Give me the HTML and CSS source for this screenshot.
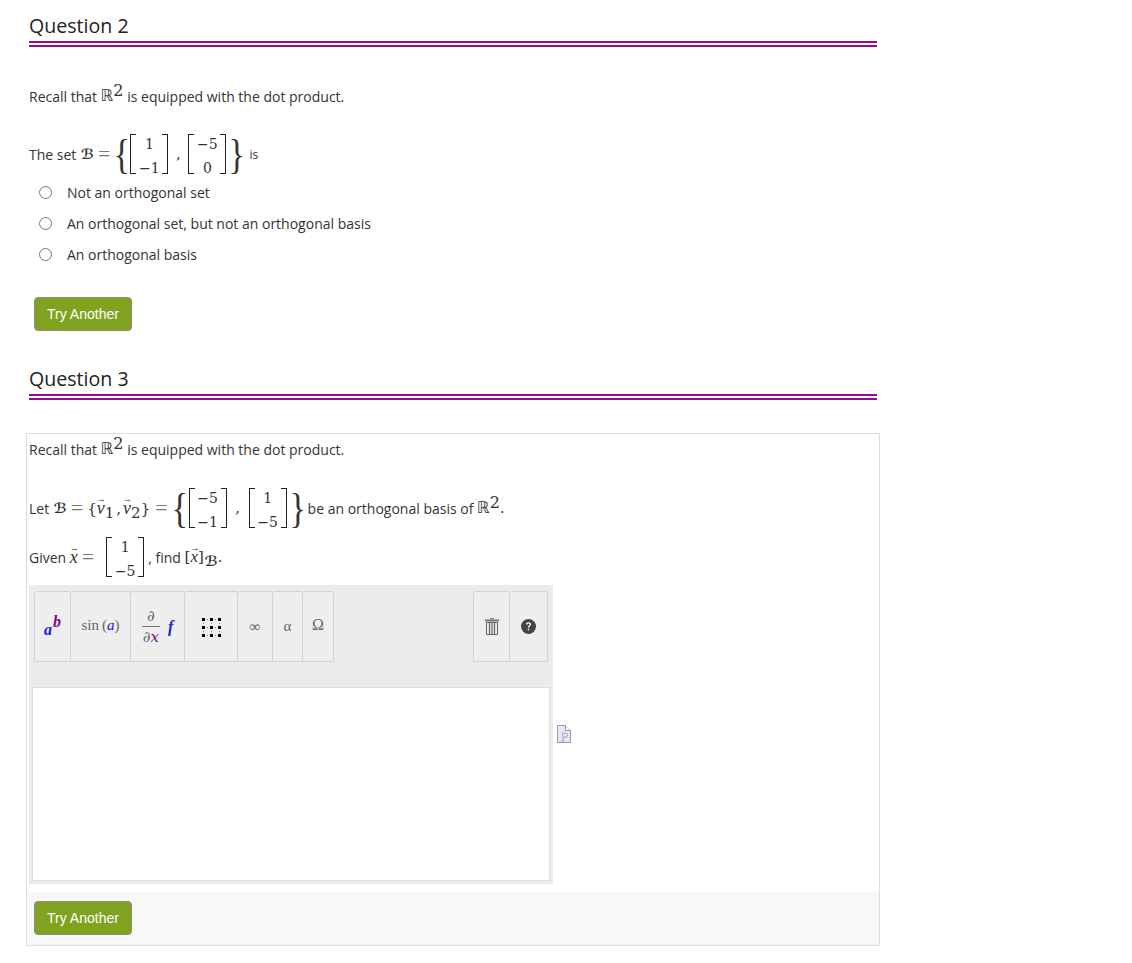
FILE: index.html
```html
<!DOCTYPE html>
<html lang="en">
<head>
<meta charset="utf-8">
<title>Questions</title>
<link rel="stylesheet" href="styles.css">
</head>
<body>
<main class="page">
  <section class="question">
    <h2 class="q-title">Question 2</h2>
    <p class="line recall">Recall that&nbsp;<span class="m bb">ℝ</span><span class="m sup">2</span>&nbsp;is equipped with the dot product.</p>
    <div class="line tall small-gap-a">
      <span>The set&nbsp;</span><span class="m script">ℬ</span><span class="m eq">=</span>
      <span class="m brace open">{</span>
      <span class="mat"><span>1</span><span>−1</span></span>
      <span class="m comma">,</span>
      <span class="mat"><span>−5</span><span>0</span></span>
      <span class="m brace close">}</span>
      <span class="after-brace small">is</span>
    </div>
    <ul class="choices">
      <li><label class="choice"><input type="radio" name="q2"><span>Not an orthogonal set</span></label></li>
      <li><label class="choice"><input type="radio" name="q2"><span>An orthogonal set, but not an orthogonal basis</span></label></li>
      <li><label class="choice"><input type="radio" name="q2"><span>An orthogonal basis</span></label></li>
    </ul>
    <button class="try first-try" type="button">Try Another</button>
  </section>

  <section class="question second">
    <h2 class="q-title">Question 3</h2>
    <div class="box">
      <p class="line recall-box">Recall that&nbsp;<span class="m bb">ℝ</span><span class="m sup">2</span>&nbsp;is equipped with the dot product.</p>
      <div class="line tall let-row">
        <span>Let&nbsp;</span><span class="m script">ℬ</span><span class="m eq">=</span>
        <span class="m set">{<span class="vec">v<i class="arrow">→</i></span><span class="sub">1</span><span class="set-comma">,</span><span class="vec">v<i class="arrow">→</i></span><span class="sub">2</span>}</span>
        <span class="m eq">=</span>
        <span class="m brace open let-open">{</span>
        <span class="mat"><span>−5</span><span>−1</span></span>
        <span class="m comma wide">,</span>
        <span class="mat"><span>1</span><span>−5</span></span>
        <span class="m brace close">}</span>
        <span class="after-brace let-after">be an orthogonal basis of&nbsp;</span><span class="m bb">ℝ</span><span class="m sup">2</span><span class="m dot">.</span>
      </div>
      <div class="line tall given-row">
        <span>Given&nbsp;</span><span class="m vec vec-x">x<i class="arrow">→</i></span><span class="m eq">=</span>
        <span class="mat given">
          <span>1</span><span>−5</span>
        </span>
        <span class="find">, find&nbsp;</span><span class="m bracket">[<span class="vec vec-x">x<i class="arrow">→</i></span>]</span><span class="m script sub-b">ℬ</span><span class="m dot">.</span>
      </div>

      <div class="editor-row">
        <div class="editor">
          <div class="toolbar">
            <div class="tools">
              <button class="tool t1" type="button"><span class="m blue it big">a</span><span class="m purple it raised">b</span></button>
              <button class="tool t2" type="button"><span class="m gray sin">sin&#8201;(<span class="blue it">a</span>)</span></button>
              <button class="tool t3" type="button">
                <span class="frac m"><span class="gray">∂</span><span class="gray den">∂<span class="purple it">x</span></span></span>
                <span class="m blue it f">f</span>
              </button>
              <button class="tool t4" type="button" aria-label="Matrix">
                <svg width="20" height="20" viewBox="0 0 20 20" aria-hidden="true">
                  <g fill="#000">
                    <rect x="1" y="1" width="3" height="3"/><rect x="9" y="1" width="3" height="3"/><rect x="17" y="1" width="3" height="3"/>
                    <rect x="1" y="9" width="3" height="3"/><rect x="9" y="9" width="3" height="3"/><rect x="17" y="9" width="3" height="3"/>
                    <rect x="1" y="17" width="3" height="3"/><rect x="9" y="17" width="3" height="3"/><rect x="17" y="17" width="3" height="3"/>
                  </g>
                  <g fill="#777">
                    <rect x="6" y="2" width="1" height="1"/><rect x="14" y="2" width="1" height="1"/>
                    <rect x="6" y="10" width="1" height="1"/><rect x="14" y="10" width="1" height="1"/>
                    <rect x="6" y="18" width="1" height="1"/><rect x="14" y="18" width="1" height="1"/>
                    <rect x="2" y="6" width="1" height="1"/><rect x="10" y="6" width="1" height="1"/><rect x="18" y="6" width="1" height="1"/>
                    <rect x="2" y="14" width="1" height="1"/><rect x="10" y="14" width="1" height="1"/><rect x="18" y="14" width="1" height="1"/>
                  </g>
                </svg>
              </button>
              <button class="tool t5" type="button"><span class="m gray inf">∞</span></button>
              <button class="tool t6" type="button"><span class="m gray sym">α</span></button>
              <button class="tool t7" type="button"><span class="m gray sym omega">Ω</span></button>
            </div>
            <div class="tools">
              <button class="tool t8" type="button" aria-label="Clear">
                <svg width="14" height="17" viewBox="0 0 14 17" aria-hidden="true">
                  <rect x="5" y="0" width="4" height="1.5" fill="#888"/>
                  <rect x="0" y="1.5" width="14" height="2" fill="#777"/>
                  <path d="M1.5 4.5h11V16.500h-11z" fill="none" stroke="#666"/>
                  <path d="M4.500 5v11M7 5v11M9.500 5v11" stroke="#666" stroke-width="1.200"/>
                </svg>
              </button>
              <button class="tool t9" type="button" aria-label="Help">
                <svg width="15" height="15" viewBox="0 0 15 15" aria-hidden="true">
                  <circle cx="7.500" cy="7.500" r="7.500" fill="#444"/>
                  <path d="M5 5.600c0-1.500 1.100-2.300 2.600-2.300 1.500 0 2.500.8 2.500 2 0 1.900-2 1.800-2 3.500H6.800c0-2.300 1.900-2.200 1.900-3.400 0-.5-.4-.9-1.100-.9-.7 0-1.200.4-1.200 1.100z" fill="#fff"/>
                  <rect x="6.800" y="9.800" width="1.400" height="1.600" fill="#fff"/>
                </svg>
              </button>
            </div>
          </div>
          <div class="input-area"></div>
        </div>
        <svg class="doc-icon" width="14" height="18" viewBox="0 0 14 18" aria-hidden="true">
          <path d="M.5.500h8l5 5v12H.500z" fill="#e6e8fa" stroke="#9a9aa8"/>
          <path d="M8.500.500v5h5" fill="#fff" stroke="#9a9aa8"/>
          <path d="M5 8h3.500a2 2 0 0 1 0 4.200H6M6 8v8M4.500 16H7.500" fill="none" stroke="#a5a5b5"/>
        </svg>
      </div>
      <div class="box-footer">
        <button class="try" type="button">Try Another</button>
      </div>
    </div>
  </section>
</main>
</body>
</html>
```

FILE: styles.css
```css
* { box-sizing: border-box; }
html, body { margin: 0; padding: 0; background: #fff; }
body {
  font-family: "Open Sans", "Liberation Sans", sans-serif;
  font-size: 14px;
  color: #333;
}
.page { width: 848px; margin-left: 29px; padding-bottom: 17px; }
.question { display: flow-root; }
.question.second { margin-top: 22px; }
.q-title {
  margin: 12px 0 0;
  height: 35px;
  font-size: 19.6px;
  font-weight: 400;
  line-height: 28px;
  color: #222;
  border-bottom: 6px double #8f0a8f;
}
.line { display: flex; align-items: center; margin: 0; white-space: pre; }
.recall { height: 28px; margin-top: 35px; }
.tall { height: 44px; }
.small-gap-a { margin-top: 22px; margin-bottom: 1px; }
.m { font-family: "DejaVu Serif", "Liberation Serif", serif; color: #333; }
.bb { font-family: "DejaVu Sans", sans-serif; font-size: 16px; line-height: 1; }
.sup { font-size: 16px; line-height: 1; position: relative; top: -5px; margin-left: 0; }
.script { font-family: "DejaVu Sans", sans-serif; font-style: italic; font-weight: 700; font-size: 14px; margin-left: 1px; }
.eq { font-family: "Liberation Serif", serif; font-size: 22px; line-height: 1; color: #777; margin: 0 4px; }
.brace {
  font-family: "Liberation Serif", serif;
  font-size: 43px;
  line-height: 44px;
  font-weight: 400;
  display: inline-block;
  width: 14px;
  text-align: center;
  transform: scaleX(.8);
}
.brace.open { margin: 0 4px 0 -2px; }
.brace.let-open { margin-right: 5px; }
.brace.close { margin: 0 0 0 1px; }
.mat {
  position: relative;
  display: inline-grid;
  grid-template-rows: 20px 20px;
  justify-items: center;
  align-items: center;
  row-gap: 4px;
  width: 38px;
  height: 40px;
  padding: 0 4px;
  font-family: "DejaVu Serif", serif;
  font-size: 14px;
  line-height: 20px;
  color: #333;
}
.mat::before, .mat::after {
  content: "";
  position: absolute;
  top: 0;
  bottom: 0;
  width: 5px;
  border-top: 1px solid #222;
  border-bottom: 1px solid #222;
}
.mat::before { left: 0; border-left: 1px solid #222; }
.mat::after { right: 0; border-right: 1px solid #222; }
.mat.given { margin-left: 8px; }
.comma { width: 20px; text-align: center; font-size: 15px; }
.comma.wide { width: 22px; }
.after-brace { margin-left: 8px; }
.after-brace.let-after { margin-left: 6px; }
.small { font-size: 12px; }
.choices { list-style: none; margin: 0; padding: 0; }
.choices li { height: 31px; }
.choice { display: flex; align-items: center; height: 31px; }
.choice input { margin: 0 15px 0 10px; width: 13px; height: 13px; flex: none; }
.try {
  display: block;
  width: 98px;
  height: 34px;
  padding: 0;
  background: #7fa31f;
  border: 1px solid #8a8f80;
  border-radius: 4px;
  color: #fff;
  font-family: "Liberation Sans", Arial, sans-serif;
  font-size: 14px;
}
.first-try { margin: 27px 0 0 5px; }
.box {
  width: 854px;
  margin: 33px 0 0 -3px;
  padding-top: 1px;
  border: 1px solid #ddd;
}
.box > .line, .editor-row { margin-left: 2px; }
.recall-box { height: 28px; }
.let-row { margin-top: 23px; }
.given-row { margin-top: 5px; }
.set { font-size: 15px; display: inline-flex; align-items: baseline; margin: 0 1px 0 0; }
.set-comma { margin: 0 2px; }
.vec {
  position: relative;
  font-family: "Liberation Serif", serif;
  font-style: italic;
  font-size: 18px;
  display: inline-block;
  line-height: 1;
}
.arrow {
  position: absolute;
  left: 0;
  top: -6px;
  font-size: 9px;
  font-style: normal;
  line-height: 12px;
}
.sub { font-size: 15px; position: relative; top: 4px; line-height: 1; }
.sub-b { position: relative; top: 4px; font-size: 14px; }
.vec-x { font-size: 18px; }
.bracket { font-size: 15px; }
.bracket .vec-x { font-size: 17px; }
.dot { font-size: 14px; }
.find { margin-left: 4px; }
.editor-row { display: flex; margin-top: 6px; }
.editor {
  width: 524px;
  height: 299px;
  padding: 6px 3px 3px;
  background: #ebebeb;
}
.toolbar { display: flex; justify-content: space-between; padding: 0 2px; }
.tools { display: flex; height: 71px; }
.tool {
  display: flex;
  align-items: center;
  justify-content: center;
  padding: 0;
  background: #eee;
  border: 1px solid #d3d3d3;
  border-left-width: 0;
  border-radius: 3px 3px 0 0;
  font-size: 13px;
}
.tool:first-child { border-left-width: 1px; }
.t1 { width: 37px; }
.t2 { width: 60px; }
.t3 { width: 54px; }
.t4 { width: 53px; }
.t5 { width: 35px; }
.t6 { width: 30px; }
.t7 { width: 31px; }
.t8 { width: 37px; }
.t9 { width: 38px; }
.blue { color: #1a1ae0; }
.purple { color: #7a0a8a; }
.gray { color: #666; }
.it { font-style: italic; }
.big { font-family: "Liberation Serif", serif; font-size: 16px; font-weight: 700; position: relative; top: 3px; }
.raised { font-family: "Liberation Serif", serif; font-size: 16px; font-weight: 700; position: relative; top: -5px; margin-left: 1px; }
.sin { font-family: "Liberation Serif", serif; font-size: 15px; margin-bottom: 3px; }
.frac { display: inline-flex; flex-direction: column; align-items: center; font-size: 15px; line-height: 20px; }
.den { border-top: 1px solid #777; padding: 0 1px; }
.f { font-family: "Liberation Serif", serif; font-size: 16px; font-weight: 700; margin-left: 8px; }
.inf { font-family: "Liberation Serif", serif; font-size: 16px; }
.sym { font-family: "Liberation Serif", serif; font-size: 15px; }
.omega { font-size: 16px; margin-bottom: 3px; }
.input-area {
  width: 518px;
  height: 194px;
  margin-top: 25px;
  background: #fff;
  border: 1px solid #ddd;
}
.doc-icon { flex: none; margin: 140px 0 0 4px; }
.box-footer {
  margin-top: 8px;
  padding: 9px 7px 10px;
  background: #f8f8f8;
}
```
